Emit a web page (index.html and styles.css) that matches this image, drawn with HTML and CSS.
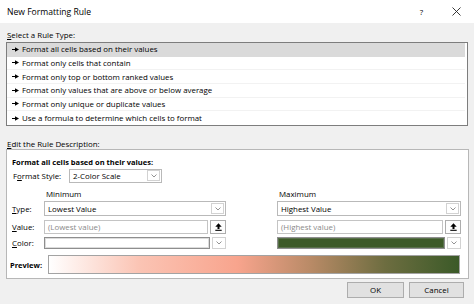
FILE: index.html
```html
<!DOCTYPE html>
<html>
<head>
<meta charset="utf-8">
<link rel="stylesheet" href="styles.css">
</head>
<body>
<div class="titlebar">
  <span class="title">New Formatting Rule</span>
  <span class="help">?</span>
  <svg class="close" width="9" height="9" viewBox="0 0 9 9"><path d="M0.5 0.5L8.5 8.5M8.5 0.5L0.5 8.5" stroke="#222" stroke-width="0.9" fill="none"/></svg>
</div>
<div class="main">
  <div class="section s1"><span><u>S</u>elect a Rule Type:</span></div>
  <div class="list">
    <div class="row sel"><svg class="arr" width="7" height="5" viewBox="0 0 7 5"><path d="M0 2.5H4" stroke="#000" stroke-width="1"/><path d="M3 0.3L7 2.5L3 4.7Z" fill="#000"/></svg>Format all cells based on their values</div>
    <div class="row"><svg class="arr" width="7" height="5" viewBox="0 0 7 5"><path d="M0 2.5H4" stroke="#000" stroke-width="1"/><path d="M3 0.3L7 2.5L3 4.7Z" fill="#000"/></svg>Format only cells that contain</div>
    <div class="row"><svg class="arr" width="7" height="5" viewBox="0 0 7 5"><path d="M0 2.5H4" stroke="#000" stroke-width="1"/><path d="M3 0.3L7 2.5L3 4.7Z" fill="#000"/></svg>Format only top or bottom ranked values</div>
    <div class="row"><svg class="arr" width="7" height="5" viewBox="0 0 7 5"><path d="M0 2.5H4" stroke="#000" stroke-width="1"/><path d="M3 0.3L7 2.5L3 4.7Z" fill="#000"/></svg>Format only values that are above or below average</div>
    <div class="row"><svg class="arr" width="7" height="5" viewBox="0 0 7 5"><path d="M0 2.5H4" stroke="#000" stroke-width="1"/><path d="M3 0.3L7 2.5L3 4.7Z" fill="#000"/></svg>Format only unique or duplicate values</div>
    <div class="row last"><svg class="arr" width="7" height="5" viewBox="0 0 7 5"><path d="M0 2.5H4" stroke="#000" stroke-width="1"/><path d="M3 0.3L7 2.5L3 4.7Z" fill="#000"/></svg>Use a formula to determine which cells to format</div>
  </div>
  <div class="section s2"><span><u>E</u>dit the Rule Description:</span></div>
  <div class="desc">
    <div class="desc-title">Format all cells based on their values:</div>
    <div class="style-row">
      <span class="style-label">F<u>o</u>rmat Style:</span>
      <div class="combo style-combo"><span class="ctext">2-Color Scale</span><span class="chev"><svg width="6" height="4" viewBox="0 0 6 4"><path d="M0.5 0.5L3 3L5.5 0.5" stroke="#777" stroke-width="0.8" fill="none"/></svg></span></div>
    </div>
    <div class="frow head-row">
      <span class="lbl"></span><span class="cmin colhead">Minimum</span><span class="spc"></span><span class="cmax colhead">Maximum</span>
    </div>
    <div class="frow type-row">
      <span class="lbl"><u>T</u>ype:</span>
      <div class="cmin combo"><span class="ctext">Lowest Value</span><span class="chev"><svg width="6" height="4" viewBox="0 0 6 4"><path d="M0.5 0.5L3 3L5.5 0.5" stroke="#777" stroke-width="0.8" fill="none"/></svg></span></div>
      <span class="spc"></span>
      <div class="cmax combo"><span class="ctext">Highest Value</span><span class="chev"><svg width="6" height="4" viewBox="0 0 6 4"><path d="M0.5 0.5L3 3L5.5 0.5" stroke="#777" stroke-width="0.8" fill="none"/></svg></span></div>
    </div>
    <div class="frow val-row">
      <span class="lbl"><u>V</u>alue:</span>
      <div class="cmin valrow"><div class="vfield">(Lowest value)</div><div class="upbtn"><svg width="7" height="8" viewBox="0 0 7 8"><path d="M3.5 0.3L6.7 3.8H4.5V6H2.5V3.8H0.3Z" fill="#000"/><path d="M0.3 7.3H6.7" stroke="#000" stroke-width="1.1"/></svg></div></div>
      <span class="spc"></span>
      <div class="cmax valrow"><div class="vfield">(Highest value)</div><div class="upbtn"><svg width="7" height="8" viewBox="0 0 7 8"><path d="M3.5 0.3L6.7 3.8H4.5V6H2.5V3.8H0.3Z" fill="#000"/><path d="M0.3 7.3H6.7" stroke="#000" stroke-width="1.1"/></svg></div></div>
    </div>
    <div class="frow col-row">
      <span class="lbl"><u>C</u>olor:</span>
      <div class="cmin colrow"><div class="swatch sw-min"></div><div class="chev2"><svg width="6" height="4" viewBox="0 0 6 4"><path d="M0.5 0.5L3 3L5.5 0.5" stroke="#777" stroke-width="0.8" fill="none"/></svg></div></div>
      <span class="spc"></span>
      <div class="cmax colrow"><div class="swatch sw-max"></div><div class="chev2"><svg width="6" height="4" viewBox="0 0 6 4"><path d="M0.5 0.5L3 3L5.5 0.5" stroke="#777" stroke-width="0.8" fill="none"/></svg></div></div>
    </div>
    <div class="preview-row">
      <span class="plabel">Preview:</span>
      <div class="pbar"></div>
    </div>
  </div>
  <div class="buttons">
    <div class="btn ok">OK</div>
    <div class="btn cancel">Cancel</div>
  </div>
</div>
</body>
</html>
```
FILE: styles.css
```css
* { box-sizing: border-box; }
html, body { margin: 0; padding: 0; }
body {
  width: 474px;
  height: 304px;
  overflow: hidden;
  background: #f0f0f0;
  font-family: "Open Sans", "Noto Sans", sans-serif;
  font-size: 7.9px;
  color: #000;
}
u { text-decoration-thickness: 0.6px; text-underline-offset: 1px; }
.titlebar {
  height: 23px;
  background: #fff;
  display: flex;
  align-items: center;
  padding-left: 7px;
  font-size: 8.6px;
}
.title { flex: 1; }
.help { font-size: 7.8px; margin-right: 29px; padding-top: 1px; }
.close { margin-right: 13px; }
.main { padding: 0 5px 0 6px; }
.section { line-height: 14px; padding-left: 1px; }
.s1 { height: 19px; padding-top: 5px; }
.s2 { height: 23px; padding-top: 11px; }
.list {
  width: 462px;
  height: 84px;
  border: 1px solid #7d7d7d;
  background: #fff;
  display: grid;
  grid-template-rows: repeat(6, 1fr);
  padding-right: 2px;
}
.row {
  display: flex;
  align-items: center;
  padding-left: 5px;
  border-bottom: 1px solid #f2f2f2;
}
.row.last { border-bottom: none; }
.row.sel { background: #dadada; border-bottom-color: #dadada; }
.arr { margin-right: 3px; flex: none; }
.desc {
  width: 463px;
  height: 130px;
  border: 1px solid #b7b7b7;
  background: #fff;
  padding: 5px 0 0 5px;
}
.desc-title { font-weight: bold; font-size: 7.5px; line-height: 14px; height: 14px; }
.style-row { display: flex; align-items: center; height: 13px; }
.style-label { width: 57px; padding-left: 1px; }
.combo {
  display: flex;
  align-items: center;
  border: 1px solid #b9b9b9;
  background: #fff;
  padding-left: 3px;
  padding-right: 1px;
}
.style-combo { width: 93px; height: 14px; }
.ctext { flex: 1; white-space: nowrap; }
.chev {
  width: 13px;
  height: 11px;
  border: 1px solid #d2d2d2;
  display: flex;
  align-items: center;
  justify-content: center;
  background: #fff;
}
.frow { display: flex; }
.lbl { width: 32px; display: flex; align-items: center; }
.cmin { width: 182px; }
.spc { width: 51px; }
.cmax { width: 184px; }
.head-row { margin-top: 6px; height: 13px; line-height: 13px; }
.colhead { padding-left: 2px; }
.type-row { height: 15px; }
.val-row { height: 14px; margin-top: 4px; }
.col-row { height: 12px; margin-top: 3px; }
.valrow, .colrow { display: flex; gap: 2px; }
.vfield {
  flex: 1;
  border: 1px solid #c4c4c4;
  background: #fff;
  color: #8a8a8a;
  padding-left: 3px;
  display: flex;
  align-items: center;
}
.upbtn {
  width: 16px;
  border: 1px solid #adadad;
  background: #fdfdfd;
  display: flex;
  align-items: center;
  justify-content: center;
}
.swatch {
  flex: 1;
  border: 1px solid #8e8e8e;
}
.sw-min { background: #fff; box-shadow: inset 0 0 0 1px #dcdcdc; }
.sw-max { background: #3d5a28; box-shadow: inset 0 0 0 1px #58704a; }
.chev2 {
  width: 14px;
  border: 1px solid #d2d2d2;
  background: #fff;
  display: flex;
  align-items: center;
  justify-content: center;
}
.preview-row {
  display: flex;
  align-items: center;
  margin-top: 6px;
  height: 19px;
  margin-left: -2px;
}
.plabel { font-weight: bold; font-size: 7.5px; width: 38px; }
.pbar {
  width: 412px;
  height: 19px;
  border: 1px solid #a3a3a3;
  background: linear-gradient(to right, #ffffff 0%, #fbc4b4 22%, #f8a48d 46%, #b88a66 64%, #6d6d40 82%, #3b5a28 100%);
}
.buttons {
  display: flex;
  justify-content: flex-end;
  gap: 5px;
  margin-top: 3px;
  padding-right: 5px;
}
.btn {
  height: 16px;
  border: 1px solid #adadad;
  background: #e1e1e1;
  display: flex;
  align-items: center;
  justify-content: center;
}
.ok { width: 57px; }
.cancel { width: 55px; }
```
